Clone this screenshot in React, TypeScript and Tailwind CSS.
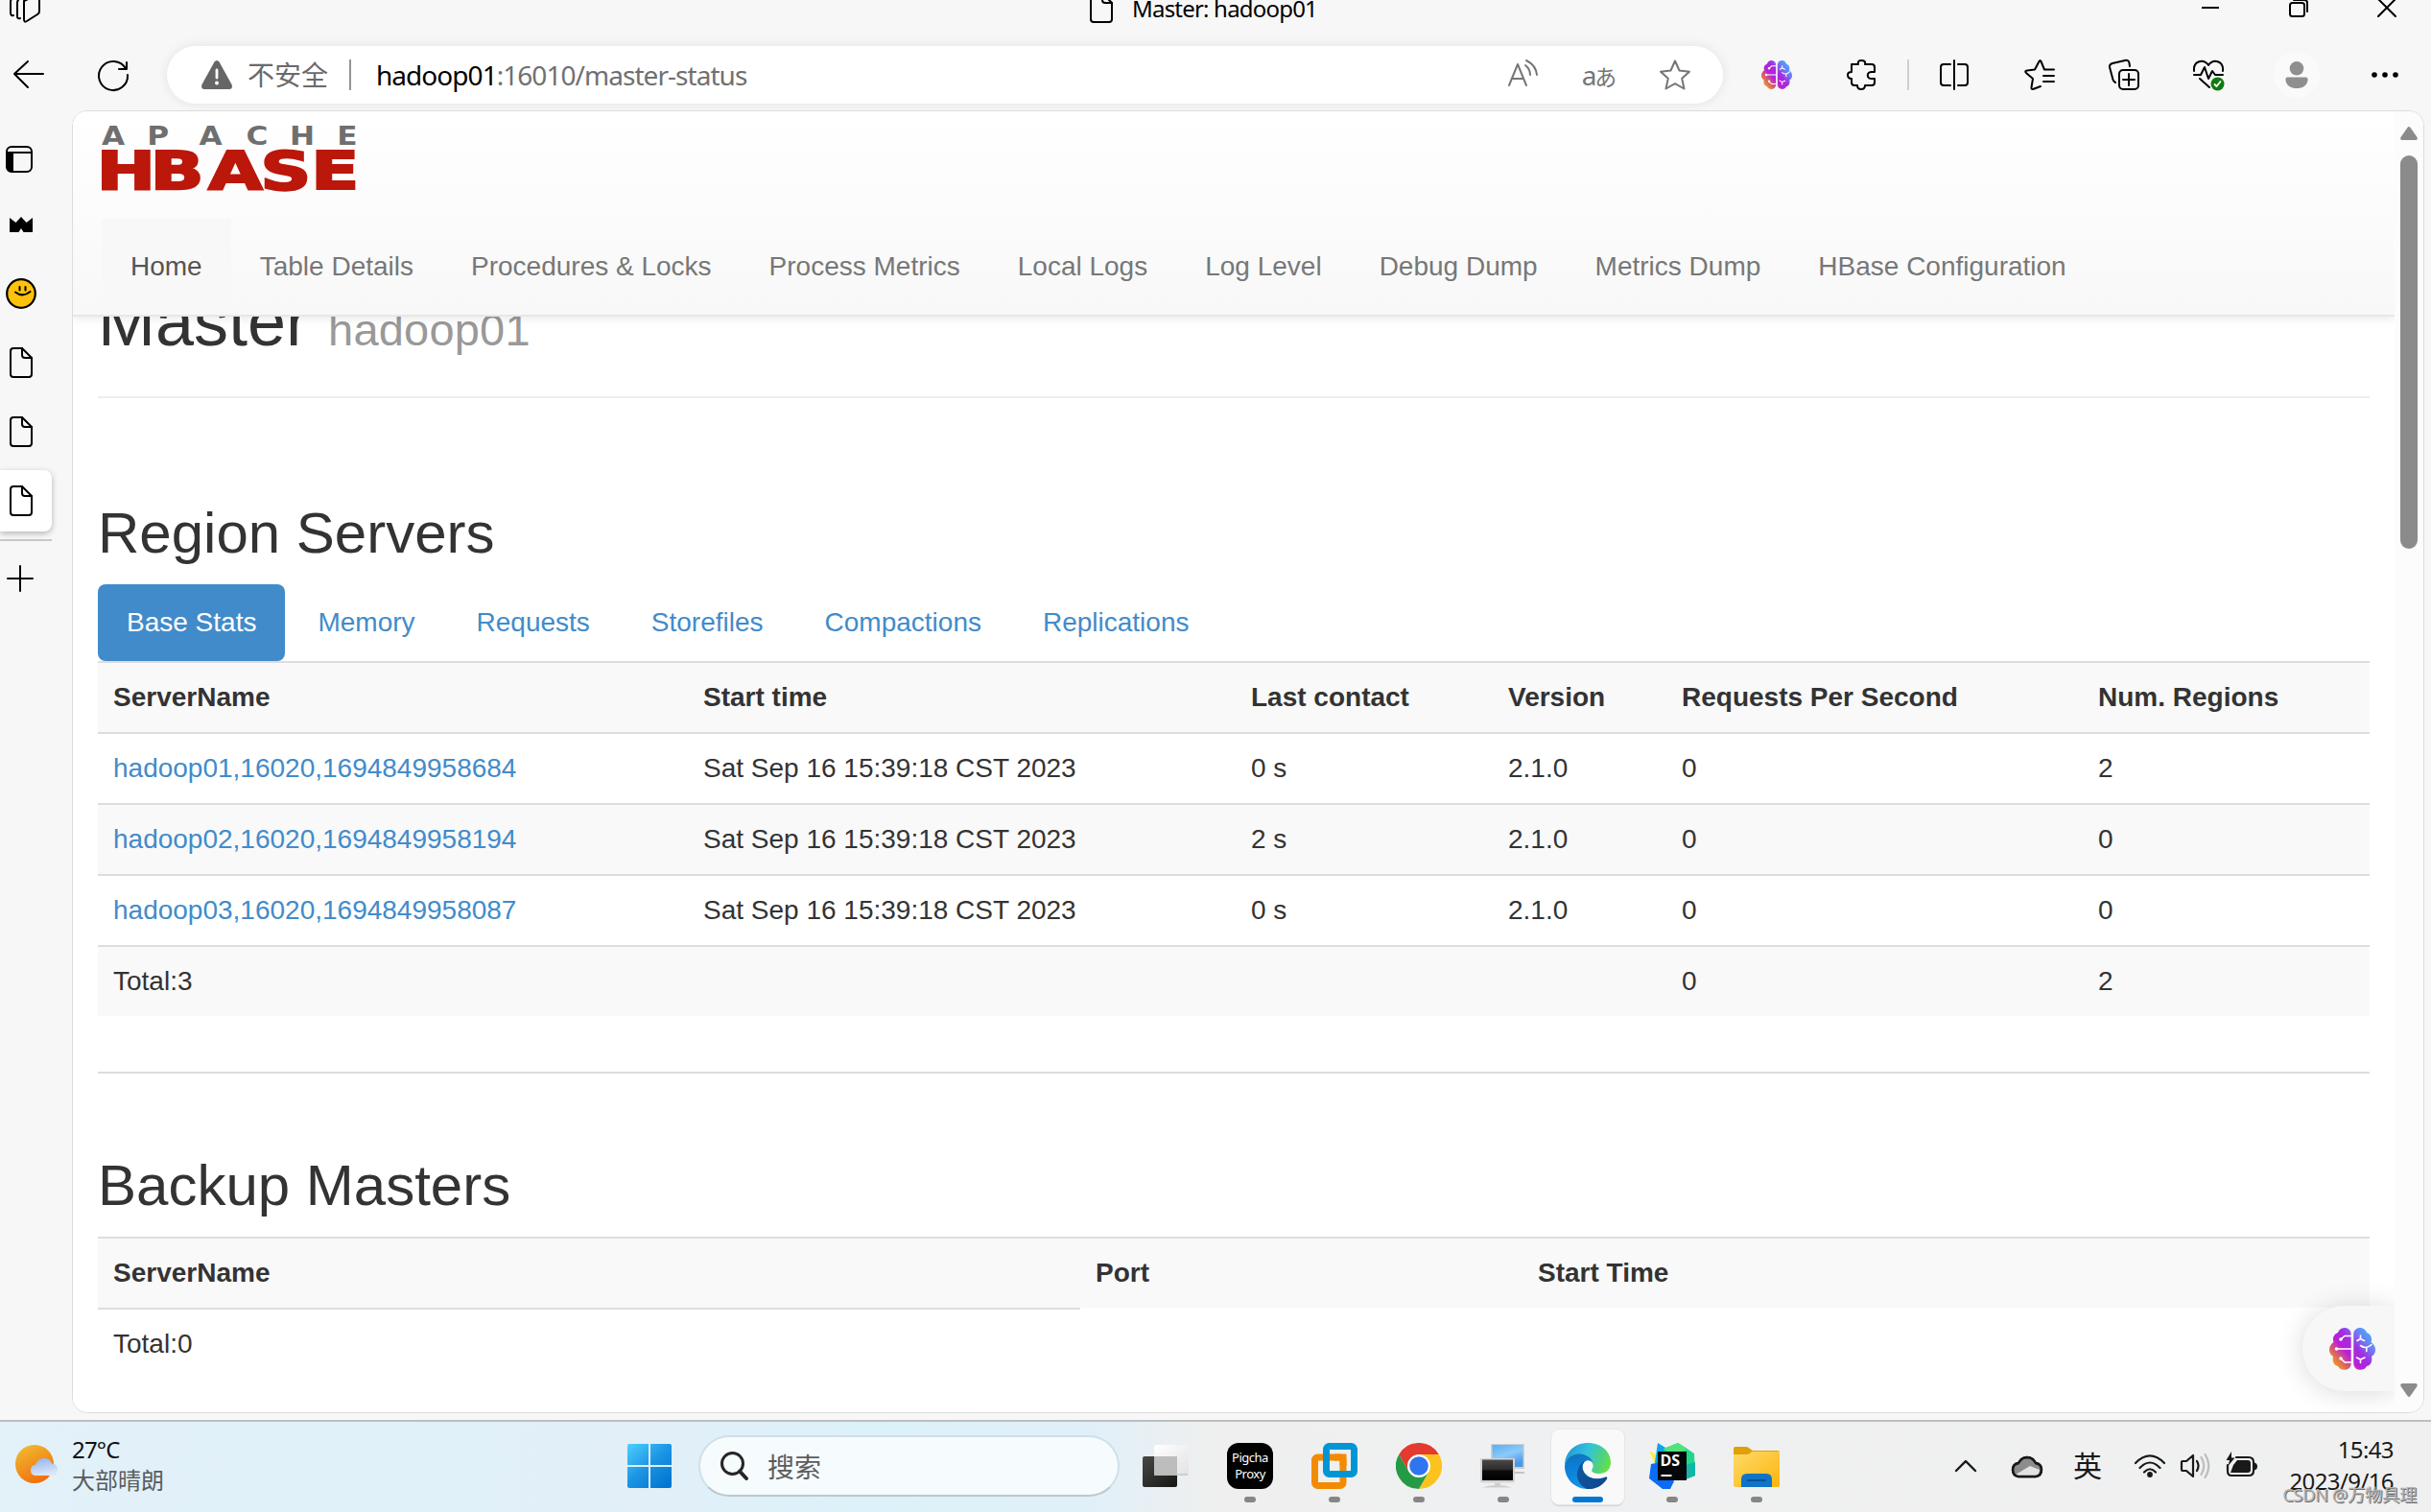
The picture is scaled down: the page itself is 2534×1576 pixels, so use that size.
import React from "react";

const UI = "font-['Noto_Sans','Noto_Sans_CJK_SC',sans-serif]";

type IconProps = { className?: string; children: React.ReactNode; w?: number; h?: number; sw?: number };

function Icon({ className = "", children, w = 32, h = 32, sw = 2 }: IconProps) {
  return (
    <svg
      viewBox={`0 0 ${w} ${h}`}
      width={w}
      height={h}
      fill="none"
      stroke="currentColor"
      strokeWidth={sw}
      strokeLinecap="round"
      strokeLinejoin="round"
      className={"shrink-0 overflow-visible " + className}
    >
      {children}
    </svg>
  );
}

function DocIcon({ className = "" }: { className?: string }) {
  return (
    <Icon w={24} className={className}>
      <path d="M4 1H13L23 11V28Q23 31 20 31H4Q1 31 1 28V4Q1 1 4 1Z" />
      <path d="M13 1V8Q13 11 16 11H23" />
    </Icon>
  );
}

function Brain({ w, h, id, className = "" }: { w: number; h: number; id: string; className?: string }) {
  const half = "M22.7 7C22.7 -2 11 -2 9 5C4 7 3 12 4.5 15C-1.5 19 -1.5 27 4 30C2.5 36 6 40 9 40C12 46 22.7 45 22.7 37Z";
  return (
    <svg viewBox="0 0 48 44" width={w} height={h} preserveAspectRatio="none" className={"shrink-0 " + className}>
      <defs>
        <linearGradient id={id} gradientUnits="userSpaceOnUse" x1="4" y1="40" x2="44" y2="6">
          <stop offset="0" stopColor="#f5a623" />
          <stop offset="0.16" stopColor="#e0704f" />
          <stop offset="0.38" stopColor="#b81fd8" />
          <stop offset="0.58" stopColor="#a52be0" />
          <stop offset="0.8" stopColor="#6f7df5" />
          <stop offset="1" stopColor="#3fb0ff" />
        </linearGradient>
      </defs>
      <path d={half + "M25.3 7C25.3 -2 37 -2 39 5C44 7 45 12 43.5 15C49.5 19 49.5 27 44 30C45.5 36 42 40 39 40C36 46 25.3 45 25.3 37Z"} fill={`url(#${id})`} />
      <g fill="none" stroke="#fff" strokeWidth="1.6" strokeLinecap="round">
        <path d="M12 12L16 8.5H22.7M7.500 22H22.700M12 32L16 36H22.700" />
        <path d="M29 13.500L32.500 11.500V8M32.500 11.500L36.500 13.500M32.500 18.500Q38.500 23 44 17.500M38.800 20.500V24.500M28.500 31L32.500 33L37 31M32.500 33V36.500" />
      </g>
      <g fill="#fff">
        <circle cx="12" cy="12" r="1.8" />
        <circle cx="7.500" cy="22" r="1.800" />
        <circle cx="12" cy="32" r="1.800" />
      </g>
    </svg>
  );
}

function TitleBar() {
  return (
    <div className="flex h-10 shrink-0 items-start">
      <Icon className="-mt-2 ml-[10px]">
        <path d="M15 9L28 3Q31 2 31 5V20Q31 22 29 23L18 30Q15 32 15 28Z" />
        <path d="M23 0L11 6Q8 8 8 11V25Q8 28 11 27M15 0L4 5Q1 7 1 10V21Q1 25 4 24" />
      </Icon>
      <DocIcon className="-mt-2 ml-[1094px]" />
      <span className={"ml-5 -mt-[7px] w-[200px] whitespace-nowrap text-[24px] leading-[32px] tracking-[-0.8px] text-black " + UI}>Master: hadoop01</span>
      <Icon w={20} h={20} className="ml-[914px] -mt-px">
        <path d="M1 9H19" strokeLinecap="butt" />
      </Icon>
      <Icon w={20} h={20} className="-mt-px ml-[72px]">
        <rect x="1" y="4" width="15" height="14" rx="2.5" />
        <path d="M5 1H16Q19 1 19 4V13" />
      </Icon>
      <Icon w={20} h={20} className="-mt-px ml-[72px]">
        <path d="M1 0L19 18M19 0L1 18" />
      </Icon>
    </div>
  );
}

function Toolbar() {
  return (
    <div className="flex h-[76px] shrink-0 items-center text-black">
      <Icon className="ml-[14px]">
        <path d="M31 15H1M15 2L1 15L15 29" />
      </Icon>
      <Icon className="ml-[56px]">
        <path d="M30 3V10H22M29 9.500A15 15 0 1 0 31 16" />
      </Icon>
      <div className="ml-10 flex h-[60px] w-[1622px] shrink-0 items-center rounded-full bg-white pr-[34px] pl-9 shadow-[0_0_12px_rgba(0,0,0,0.09)]">
        <svg viewBox="0 0 32 30" width="32" height="30" className="shrink-0">
          <path d="M13.500 1.500Q16 -1.500 18.500 1.500L31.500 25Q33 29.500 29 30H3Q-1 29.500 0.500 25Z" fill="#666" />
          <path d="M16 10V18" stroke="#fff" strokeWidth="2.800" strokeLinecap="round" />
          <circle cx="16" cy="23.500" r="2" fill="#fff" />
        </svg>
        <span className={"ml-4 text-[28px] leading-none text-[#6a6a6a] " + UI}>不安全</span>
        <div className="ml-[22px] h-8 w-[2px] bg-[#949494]" />
        <span className={"ml-[26px] whitespace-nowrap text-[28px] leading-none tracking-[-0.96px] text-[#707070] " + UI}>
          <span className="text-black">hadoop01</span>:16010/master-status
        </span>
        <Icon className="ml-auto text-[#767676]">
          <path d="M1 27L10 5L19 27M4.500 20H15.500M18 6Q23 10 23 16M19 1Q29 6 30 16" />
        </Icon>
        <div className={"ml-[44px] w-[38px] whitespace-nowrap text-center leading-none text-[#767676] " + UI}>
          <span className="text-[28px] leading-none">a</span>
          <span className="-ml-[2px] text-[23px] leading-none">あ</span>
        </div>
        <Icon className="ml-[44px] text-[#767676]">
          <path d="M16 1.500L20.500 11.500L31 12.700L23.200 19.800L25.500 30.500L16 25.200L6.500 30.500L8.800 19.800L1 12.700L11.500 11.500Z" />
        </Icon>
      </div>
      <Brain w={32} h={30} id="brainBar" className="ml-10" />
      <Icon className="ml-[56px]">
        <path d="M6 5H13C12 2 14 1 16 1C19 1 21 2 20 5H27Q30 5 30 8V13H28C21 12 21 21 28 20H30V24Q30 27 27 27H20C20 30 18 31 16 31C13 31 12 30 12 27H9Q6 27 6 24V20C3 20 2 19 2 16C2 14 3 13 6 13Z" />
      </Icon>
      <div className="ml-8 h-8 w-[2px] bg-[#cfcfcf]" />
      <Icon className="ml-[31px]">
        <path d="M12 5H5Q2 5 2 8V24Q2 27 5 27H12M20 5H27Q30 5 30 8V24Q30 27 27 27H20M16 1V31" />
      </Icon>
      <Icon className="ml-[57px]">
        <path d="M17 28L9 31Q7 31 7.500 29L9 20L2 14Q0 12 3 11.500L11 10.500L15.500 2Q16.500 0 17.500 2L21 10.500H31M20 17H31M20 23H31" />
      </Icon>
      <Icon className="ml-[56px]">
        <rect x="11" y="11" width="20" height="20" rx="4" />
        <path d="M21 15V27M15 21H27M7 24Q5 23 4.500 21L1 8Q0.500 5 4 4L17 1Q21 0 21.500 4L22 7" />
      </Icon>
      <Icon className="ml-[56px]">
        <path d="M1 12C0 1 11 -1 16 6C21 -1 32 1 31 12M1 16H8L12 8L16 20L20 12L23 16H31M7 20L17 29" />
        <circle cx="25.500" cy="25.500" r="7" fill="#0f7b10" stroke="none" />
        <path d="M22.500 26L24.500 28L28.500 23" stroke="#fff" strokeWidth="1.800" />
      </Icon>
      <div className="ml-[52px] flex size-12 items-center justify-center rounded-full bg-[#fafafa]">
        <svg viewBox="0 0 24 28" width="24" height="28">
          <circle cx="12" cy="7.300" r="7.300" fill="#8f8f8f" />
          <path d="M2.500 16.500H21.500Q24 16.500 23.500 20C22.500 25.500 18 28 12 28S1.500 25.500 0.500 20Q0 16.500 2.500 16.500Z" fill="#8f8f8f" />
        </svg>
      </div>
      <svg viewBox="0 0 28 8" width="28" height="8" className="ml-[54px]">
        <circle cx="3" cy="4" r="2.800" />
        <circle cx="14" cy="4" r="2.800" />
        <circle cx="25" cy="4" r="2.800" />
      </svg>
    </div>
  );
}

function Sidebar() {
  return (
    <div className="flex w-[75px] shrink-0 flex-col text-black">
      <Icon w={28} h={28} className="mt-9 ml-[6px]">
        <rect x="1" y="1" width="26" height="26" rx="5" />
        <path d="M1 7H27" />
        <path d="M1.500 7H8V26.500H5Q1.500 26 1.500 23Z" fill="currentColor" stroke="none" />
      </Icon>
      <svg viewBox="0 0 24 16" width="24" height="16" className="mt-[46px] ml-[10px]">
        <path d="M0 1L6.500 6L12 0L17.500 6L24 1V16H14.500L12 12L9.500 16H0Z" />
      </svg>
      <svg viewBox="0 0 32 32" width="32" height="32" className="mt-12 ml-[6px]">
        <circle cx="16" cy="16" r="14.800" fill="#ffc20a" stroke="#000" strokeWidth="2.200" />
        <path d="M14.500 9V12.500M20.500 9V12.500M10 14.500Q17.500 20.500 25.500 14" stroke="#000" strokeWidth="2" fill="none" strokeLinecap="round" />
      </svg>
      <DocIcon className="mt-10 ml-[10px]" />
      <DocIcon className="mt-10 ml-[10px]" />
      <div className="mt-6 flex h-16 w-[54px] items-center rounded-r-lg bg-white pl-[10px] shadow-[0_2px_6px_rgba(0,0,0,0.28)]">
        <DocIcon />
      </div>
      <div className="mt-2 h-[2px] w-[54px] bg-[#c8c8c8]" />
      <Icon w={28} h={28} className="mt-[25px] ml-[7px]">
        <path d="M14 1V27M1 14H27" />
      </Icon>
    </div>
  );
}

/* Apache HBase wordmark */
function Logo() {
  return (
    <svg viewBox="0 0 268 66" width="268" height="66" className="block overflow-visible" fontFamily="DejaVu Sans" fontWeight="bold">
      <g transform="scale(1.2 1)">
        <text x="0 39.3 84.5 125.5 163.400 204.300" y="19" fontSize="26" fill="#6f6f6f">APACHE</text>
      </g>
      <g transform="scale(1.32 1)">
        <text x="-4 38.500 84 125.300 165.300" y="65" fontSize="55.500" fill="#bb170b" stroke="#bb170b" strokeWidth="2.200">HBASE</text>
      </g>
    </svg>
  );
}

const navItems = ["Home", "Table Details", "Procedures & Locks", "Process Metrics", "Local Logs", "Log Level", "Debug Dump", "Metrics Dump", "HBase Configuration"];

function NavBar() {
  return (
    <div className="relative z-10 flex h-[214px] flex-col border-b-2 border-[#e7e7e7] bg-linear-to-b from-white to-[#f8f8f8] px-[30px] pt-4 shadow-[0_2px_10px_rgba(0,0,0,0.09)]">
      <Logo />
      <nav className="mt-[30px] flex">
        {navItems.map((n, i) => (
          <a key={n} className={"px-[30px] py-[30px] leading-10 whitespace-nowrap " + (i === 0 ? "bg-[#f8f8f8] text-[#555]" : "text-[#777]")}>
            {n}
          </a>
        ))}
      </nav>
    </div>
  );
}

const tabs = ["Base Stats", "Memory", "Requests", "Storefiles", "Compactions", "Replications"];
const servers = [
  ["hadoop01,16020,1694849958684", "Sat Sep 16 15:39:18 CST 2023", "0 s", "2.1.0", "0", "2"],
  ["hadoop02,16020,1694849958194", "Sat Sep 16 15:39:18 CST 2023", "2 s", "2.1.0", "0", "0"],
  ["hadoop03,16020,1694849958087", "Sat Sep 16 15:39:18 CST 2023", "0 s", "2.1.0", "0", "0"],
];
const heads = ["ServerName", "Start time", "Last contact", "Version", "Requests Per Second", "Num. Regions"];
const rowCls = "grid h-[74px] grid-cols-[615px_571px_268px_181px_434px_299px] border-t-2 border-[#ddd] leading-10";
const cell = "px-4 py-4 whitespace-nowrap";

function Content() {
  return (
    <div className="px-[26px]">
      <h1 className="-mt-[34px] h-[119px] border-b-2 border-[#eee] text-[72px] leading-[79px]">
        Master <small className="text-[47px] leading-none tracking-[0.2px] text-[#999]">hadoop01</small>
      </h1>
      <h2 className="mt-[108px] mb-5 text-[60px] leading-[66px]">Region Servers</h2>
      <div className="flex h-20 gap-1">
        {tabs.map((t, i) => (
          <a key={t} className={"rounded-lg px-[30px] py-5 leading-10 " + (i === 0 ? "bg-[#428bca] text-white" : "text-[#428bca]")}>
            {t}
          </a>
        ))}
      </div>
      <div>
        <div className={rowCls + " bg-[#f9f9f9] font-bold"}>
          {heads.map((h) => (
            <div key={h} className={cell}>{h}</div>
          ))}
        </div>
        {servers.map((r, ri) => (
          <div key={r[0]} className={rowCls + (ri === 1 ? " bg-[#f9f9f9]" : "")}>
            {r.map((c, ci) => (
              <div key={ci} className={cell + (ci === 0 ? " text-[#428bca]" : "")}>{c}</div>
            ))}
          </div>
        ))}
        <div className={rowCls + " bg-[#f9f9f9]"}>
          {["Total:3", "", "", "", "0", "2"].map((c, ci) => (
            <div key={ci} className={cell}>{c}</div>
          ))}
        </div>
      </div>
      <div className="mt-[58px] h-[2px] bg-[#ddd]" />
      <h2 className="mt-[84px] mb-5 text-[60px] leading-[66px]">Backup Masters</h2>
      <div className="grid h-[74px] grid-cols-[1024px_461px_883px] border-t-2 border-[#ddd] bg-[#f9f9f9] leading-10 font-bold">
        <div className={cell}>ServerName</div>
        <div className={cell}>Port</div>
        <div className={cell}>Start Time</div>
      </div>
      <div className={"w-[1024px] border-t-2 border-[#ddd] leading-10 " + cell}>Total:0</div>
    </div>
  );
}

function Page() {
  return (
    <div className="relative -mt-px flex h-[1358px] w-[2452px] shrink-0 overflow-hidden rounded-2xl border border-[#dcdcdc] bg-white">
      <div className="w-[2420px] shrink-0 overflow-hidden bg-white font-['Liberation_Sans',sans-serif] text-[28px] text-[#333]">
        <NavBar />
        <Content />
      </div>
      <div className="relative z-20 flex w-[30px] flex-col items-center bg-[#fcfcfc] pt-4">
        <svg viewBox="0 0 18 14" width="18" height="14" fill="#8b8b8b"><path d="M7.500 1Q9 -1 10.500 1L17.500 11Q18.500 14 16 14H2Q-0.500 14 0.500 11Z" /></svg>
        <div className="mt-4 h-[410px] w-[18px] rounded-full bg-[#8b8b8b]" />
        <svg viewBox="0 0 18 14" width="18" height="14" fill="#8b8b8b" className="mt-auto mb-4"><path d="M7.500 13Q9 15 10.500 13L17.500 3Q18.500 0 16 0H2Q-0.500 0 0.500 3Z" /></svg>
      </div>
      <div className="absolute right-[30px] bottom-[22px] z-10 flex h-[89px] w-24 items-center rounded-l-full bg-[#f7f7f7] pl-7 shadow-[0_2px_28px_rgba(0,0,0,0.15)]">
        <Brain w={48} h={44} id="brainFloat" />
      </div>
    </div>
  );
}

function TaskItem({ children, active = false, dot = true }: { children: React.ReactNode; active?: boolean; dot?: boolean }) {
  return (
    <div className="flex h-full w-[88px] shrink-0 justify-center pt-2">
      <div className={"flex h-[78px] w-[76px] flex-col items-center pt-[14px] " + (active ? "rounded-lg bg-[#f9f9f9] shadow-[0_0_0_1px_#e6e6e6,0_2px_1px_#d2d2d2]" : "")}>
        <div className="flex size-12 items-center justify-center">{children}</div>
        {dot && <div className={"mt-2 h-[6px] shrink-0 rounded-full " + (active ? "w-8 bg-[#0078d4]" : "w-3 bg-[#868686]")} />}
      </div>
    </div>
  );
}

function Chrome() {
  return (
    <svg viewBox="0 0 48 48" width="48" height="48">
      <path d="M3.200 12A24 24 0 0 1 44.800 12H24L13.600 30Z" fill="#e33b2e" />
      <path d="M44.800 12A24 24 0 0 1 24 48L34.400 30Q38 20 24 12Z" fill="#fcc31e" />
      <path d="M3.200 12A24 24 0 0 0 24 48L34.400 30Q24 38 13.600 30Z" fill="#259a45" />
      <circle cx="24" cy="24" r="12" fill="#fff" />
      <circle cx="24" cy="24" r="9.800" fill="#2f76ee" />
    </svg>
  );
}

function Edge() {
  return (
    <svg viewBox="0 0 48 48" width="48" height="48">
      <defs>
        <linearGradient id="edgeTop" x1="0" y1="0.300" x2="1" y2="0.600">
          <stop offset="0" stopColor="#2497d6" />
          <stop offset="0.450" stopColor="#33c3dd" />
          <stop offset="0.800" stopColor="#4fd37a" />
          <stop offset="1" stopColor="#66e04a" />
        </linearGradient>
        <linearGradient id="edgeBody" x1="0" y1="0" x2="0.300" y2="1">
          <stop offset="0" stopColor="#1470b4" />
          <stop offset="0.400" stopColor="#0a80d8" />
          <stop offset="1" stopColor="#1592e4" />
        </linearGradient>
        <linearGradient id="edgeDark" x1="0" y1="0" x2="1" y2="0.600">
          <stop offset="0" stopColor="#10589c" />
          <stop offset="1" stopColor="#0d4a94" />
        </linearGradient>
      </defs>
      <path d="M0 24C0 9 11 0 24 0C39 0 48 10 48 20C48 28 43 32 36 32C30 32 27 30 28.500 27.500C31 24 29 19 25 16C17 9 4 12 0 24Z" fill="url(#edgeTop)" />
      <path d="M0 24C2 15 9 11 16 11.500C24 12 29 17 29.500 22C28 17.500 22 17 19.500 21C16 27 22 37 33 37.500C38 38 43 35 44 36C40 44 32 48 24 48C10 48 0 37 0 24Z" fill="url(#edgeBody)" />
      <path d="M23 48C14 43 11 35 14 27C16 22 19 19 22 18.500C17 22 17 30 24 35C31 39 39 37 42.500 35.500C44.500 35 44.500 36.500 44 37.500C39.500 45 31 49 23 48Z" fill="url(#edgeDark)" />
    </svg>
  );
}

function Terminal() {
  return (
    <svg viewBox="0 0 48 48" width="48" height="48">
      <defs>
        <linearGradient id="scrBlue" x1="0" y1="0" x2="0.500" y2="1">
          <stop offset="0" stopColor="#5aaef0" />
          <stop offset="0.550" stopColor="#8ccafa" />
          <stop offset="1" stopColor="#4a98ea" />
        </linearGradient>
        <linearGradient id="scrBlack" x1="0" y1="0" x2="0" y2="1">
          <stop offset="0" stopColor="#4a4a4a" />
          <stop offset="0.500" stopColor="#2a2a2a" />
          <stop offset="0.520" stopColor="#0c0c0c" />
          <stop offset="1" stopColor="#000" />
        </linearGradient>
      </defs>
      <path d="M34 30H46V32H34Z" fill="#c4c4c4" />
      <rect x="11" y="1" width="35" height="26" fill="#d0d0d0" />
      <rect x="12.500" y="2" width="32" height="23" fill="url(#scrBlue)" />
      <path d="M0 16H36V39Q36 41.500 34 41.500H2Q0 41.500 0 39Z" fill="#d4d4d4" />
      <rect x="2" y="17.500" width="32" height="21.500" fill="url(#scrBlack)" />
      <path d="M15 41.500H21V44Q27 44 33 46.500H2Q8 44 15 44Z" fill="#cfcfcf" />
    </svg>
  );
}

function DataSpell() {
  return (
    <svg viewBox="0 0 48 48" width="48" height="48">
      <path d="M0 8L9 13L6 22Z" fill="#f6f04a" />
      <path d="M9 0L22 8L16 40L6 20Z" fill="#0aa6e8" />
      <path d="M15 6L30 0L47 11L48 34L38 38L20 20Z" fill="#21d789" />
      <path d="M15 6L30 0L40 6L26 14Z" fill="#52e27a" />
      <path d="M36 24L48 20V34L38 38Z" fill="#12b5a8" />
      <path d="M2 22L12 20L26 40L22 48H14L0 37Z" fill="#0a6cf5" />
      <rect x="9" y="9" width="30" height="30" fill="#050808" />
      <text x="11.500" y="23.500" fontFamily="Open Sans" fontWeight="bold" fontSize="16" fill="#fff">DS</text>
      <rect x="12.500" y="33" width="11" height="2" fill="#fff" />
    </svg>
  );
}

function Folder() {
  return (
    <svg viewBox="0 0 48 48" width="48" height="48">
      <defs>
        <linearGradient id="fold" x1="0" y1="0" x2="1" y2="1">
          <stop offset="0" stopColor="#ffdb6a" />
          <stop offset="1" stopColor="#fbb40c" />
        </linearGradient>
      </defs>
      <path d="M0 6Q0 4 2 4H13Q15 4 17 6L20 8H46Q48 8 48 10V14H0Z" fill="#e0a008" />
      <path d="M0 12H14Q17 12 19 9H48V44Q48 46 46 46H2Q0 46 0 44Z" fill="url(#fold)" />
      <path d="M8 38Q8 32 14 32H34Q40 32 40 38V46H8Z" fill="#0f74c8" />
      <path d="M15 39H33" stroke="#0a4f94" strokeWidth="2" strokeLinecap="round" />
    </svg>
  );
}

function Taskbar() {
  return (
    <div className={"relative flex h-24 shrink-0 border-t-2 border-[#bcbec0] bg-[linear-gradient(90deg,#e3f1f9_0%,#e0f1f9_17%,#e2eff8_26%,#dcf1f9_36%,#e1f0f8_45%,#efefef_50%,#eff0f1_60%,#f0f0f0_100%)] " + UI}>
      <div className="flex w-[633px] shrink-0 pl-4">
        <svg viewBox="0 0 44 40" width="44" height="40" className="mt-6">
          <defs>
            <linearGradient id="sun" x1="0.200" y1="0" x2="0.700" y2="1">
              <stop offset="0" stopColor="#f0bb30" />
              <stop offset="1" stopColor="#f26a0c" />
            </linearGradient>
            <linearGradient id="cld" x1="0" y1="0" x2="0.300" y2="1">
              <stop offset="0" stopColor="#8fb0e8" />
              <stop offset="1" stopColor="#dbe6fa" />
            </linearGradient>
          </defs>
          <circle cx="20" cy="20" r="20" fill="url(#sun)" />
          <path d="M22 32Q16 32 16 26.500Q16 21 21 21Q23 14 30 14Q36 14 38 19.500Q44 20 44 26Q44 32 38 32Z" fill="url(#cld)" />
        </svg>
        <div className="mt-[13px] ml-[15px] text-[24px] leading-8">
          <div className="tracking-[-0.8px] text-[#111]">27°C</div>
          <div className="text-[#585c60]">大部晴朗</div>
        </div>
      </div>
      <TaskItem dot={false}>
        <svg viewBox="0 0 46 46" width="46" height="46">
          <defs>
            <linearGradient id="win" gradientUnits="userSpaceOnUse" x1="0" y1="0" x2="40" y2="46">
              <stop offset="0" stopColor="#4dd0ff" />
              <stop offset="0.500" stopColor="#1c96e4" />
              <stop offset="1" stopColor="#0074d0" />
            </linearGradient>
          </defs>
          <path d="M2 0H22V22H0V2Q0 0 2 0ZM24 0H44Q46 0 46 2V22H24ZM0 24H22V46H2Q0 46 0 44ZM24 24H46V44Q46 46 44 46H24Z" fill="url(#win)" />
        </svg>
      </TaskItem>
      <div className="mt-[14px] ml-[7px] flex h-16 w-[439px] shrink-0 items-center rounded-full border-2 border-[#cfe0e7] border-b-[#b9c9cf] bg-[#f6fbfe] pl-[21px]">
        <Icon w={28} h={30} sw={3} className="text-[#262626]">
          <circle cx="12.500" cy="12.500" r="11" />
          <path d="M20 20.500L27 28" strokeWidth="4" />
        </Icon>
        <span className="mt-px ml-[21px] text-[28px] leading-none text-[#5c5c5c]">搜索</span>
      </div>
      <div className="ml-1 flex">
        <TaskItem dot={false}>
          <svg viewBox="0 0 48 44" width="48" height="44">
            <defs>
              <linearGradient id="tv" x1="0" y1="0" x2="1" y2="1">
                <stop offset="0" stopColor="#4a4846" />
                <stop offset="1" stopColor="#161616" />
              </linearGradient>
              <linearGradient id="tvl" x1="0" y1="0" x2="1" y2="1">
                <stop offset="0" stopColor="#fff" />
                <stop offset="1" stopColor="#e2e2e2" />
              </linearGradient>
            </defs>
            <rect x="12" y="0" width="36" height="32" rx="2" fill="url(#tvl)" />
            <rect x="0" y="12" width="36" height="32" rx="2" fill="url(#tv)" />
            <path d="M12 12H36V32H12Z" fill="#bdbdbd" />
            <path d="M12 31H47" stroke="#b8b8b8" strokeWidth="1" />
          </svg>
        </TaskItem>
        <TaskItem>
          <div className="flex size-12 shrink-0 flex-col items-center justify-center rounded-[12px] bg-black text-[13px] leading-[17px] tracking-[-0.5px] text-white">
            <span>Pigcha</span>
            <span>Proxy</span>
          </div>
        </TaskItem>
        <TaskItem>
          <svg viewBox="0 0 48 48" width="48" height="48" fill="none" strokeWidth="7">
            <rect x="3.500" y="15" width="29.500" height="29.500" rx="3" stroke="#f38b00" />
            <rect x="15.500" y="3.500" width="29" height="29" rx="3" stroke="#0095d5" />
            <path d="M24 15H33V24" stroke="#f38b00" />
          </svg>
        </TaskItem>
        <TaskItem><Chrome /></TaskItem>
        <TaskItem><Terminal /></TaskItem>
        <TaskItem active><Edge /></TaskItem>
        <TaskItem><DataSpell /></TaskItem>
        <TaskItem><Folder /></TaskItem>
      </div>
      <div className="ml-auto flex items-start text-[#191919]">
        <Icon w={22} h={12} sw={2.4} className="mt-10">
          <path d="M1 11L11 1L21 11" />
        </Icon>
        <Icon w={32} h={22} sw={2.400} className="mt-[36px] ml-[37px]">
          <path d="M7 21Q1 20 1 14Q1 8 7 7Q10 1 16 1Q22 1 25 7Q31 8 31 14Q31 20 25 21Z" fill="#8c8c8c" />
          <path d="M4 19L19 10L29 14Q29 19 25 20H7Z" fill="#e2e2e2" stroke="none" />
          <path d="M7 21Q1 20 1 14Q1 8 7 7Q10 1 16 1Q22 1 25 7Q31 8 31 14Q31 20 25 21Z" />
        </Icon>
        <span className="mt-7 ml-8 w-[30px] text-[30px] leading-9">英</span>
        <Icon w={32} h={24} sw={2.200} className="mt-[34px] ml-[34px]">
          <path d="M1 9Q16 -6 31 9M5.500 14Q16 3 26.500 14M10 18.500Q16 12 22 18.500" />
          <circle cx="16" cy="21" r="1.800" fill="currentColor" />
        </Icon>
        <Icon w={32} h={28} sw={2.200} className="mt-8 ml-4">
          <path d="M2 9H6L13 3V25L6 19H2Q1 19 1 18V10Q1 9 2 9ZM17 9Q20 14 17 19" />
          <path d="M21.500 5Q27 14 21.500 23M25.500 2Q33 14 25.500 26" stroke="#bdbdbd" />
        </Icon>
        <Icon w={33} h={26} sw={2.200} className="mt-[31px] ml-[15px]">
          <path d="M11 6H24Q29 6 29 11V20Q29 25 24 25H6Q2 25 2 20V14" />
          <path d="M12 9H23Q26 9 26 12V19Q26 22 23 22H5L8 14Z" fill="currentColor" stroke="none" />
          <path d="M29.500 11.500Q33 12 33 15.500Q33 19 29.500 19.500Z" fill="currentColor" stroke="none" />
          <path d="M6 0L0.500 9H4L2.500 15L9.500 6.500H6Z" fill="currentColor" stroke="none" />
        </Icon>
        <div className="mt-3 mr-[39px] ml-7 w-[114px] text-right text-[24px] leading-[33px] tracking-[-0.6px]">
          <div>15:43</div>
          <div>2023/9/16</div>
        </div>
      </div>
      <div className="absolute right-[15px] bottom-[3px] text-[18.5px] leading-[30px] tracking-[-0.5px] whitespace-nowrap text-[#b4b4b4] [text-shadow:1px_1px_0_#6e6e6e]">CSDN @万物具理</div>
    </div>
  );
}

export default function App() {
  return (
    <div className="flex h-[1576px] w-[2534px] flex-col overflow-hidden bg-[#f7f7f7]">
      <TitleBar />
      <Toolbar />
      <div className="flex h-[1364px] shrink-0">
        <Sidebar />
        <Page />
      </div>
      <Taskbar />
    </div>
  );
}
